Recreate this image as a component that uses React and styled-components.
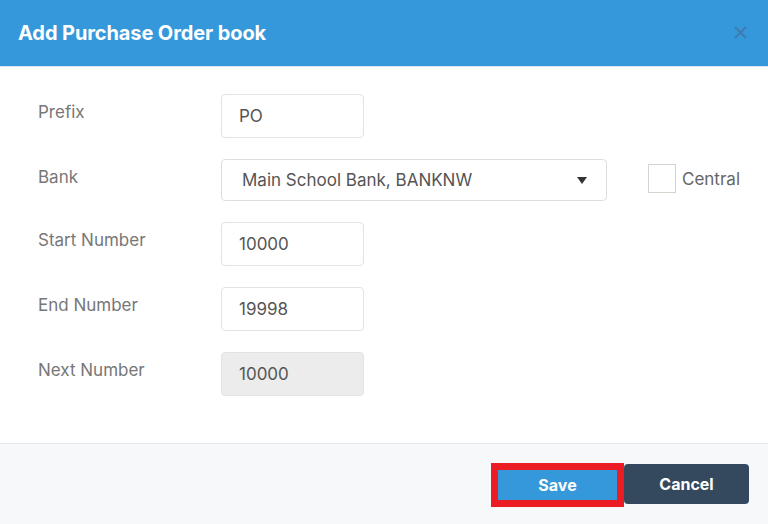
import React from "react";
import styled, { createGlobalStyle } from "styled-components";

const GlobalStyle = createGlobalStyle`
  * { box-sizing: border-box; }
  body {
    margin: 0;
    background: #ffffff;
    font-family: Inter, "Open Sans", Arial, sans-serif;
  }
`;

const Modal = styled.div`
  width: 768px;
  height: 524px;
  display: flex;
  flex-direction: column;
  background: #fff;
`;

const Header = styled.div`
  height: 67px;
  background: #3598db;
  display: flex;
  align-items: center;
  justify-content: space-between;
  padding: 0 21px 1px 18px;
  border-bottom: 1px solid #d8e6f2;
`;

const Title = styled.h2`
  margin: 0;
  color: #fff;
  font-size: 20px;
  font-weight: 700;
  letter-spacing: -0.1px;
`;

const Close = styled.button`
  border: none;
  background: none;
  padding: 0;
  width: 14px;
  height: 14px;
  display: flex;
  align-items: center;
  justify-content: center;
  cursor: pointer;
`;

const Body = styled.div`
  flex: 1;
  padding: 27px 0 0 38px;
  display: flex;
  flex-direction: column;
  gap: 21px;
`;

const Row = styled.div`
  display: flex;
  align-items: flex-start;
`;

const Label = styled.label`
  width: 183px;
  padding-top: 8px;
  font-size: 17px;
  line-height: 20px;
  color: #777;
`;

const Input = styled.input`
  width: 143px;
  height: 44px;
  border: 1px solid #e3e3e3;
  border-radius: 4px;
  padding: 0 0 0 17px;
  font-family: inherit;
  font-size: 17px;
  color: #555;
  background: ${(props) => (props.disabled ? "#ececec" : "#fff")};
  outline: none;
`;

const Select = styled.div`
  width: 386px;
  height: 42px;
  border: 1px solid #dedede;
  border-radius: 4px;
  padding: 0 19px 0 20px;
  display: flex;
  align-items: center;
  justify-content: space-between;
  font-size: 17px;
  color: #555;
`;

const Caret = styled.span`
  width: 0;
  height: 0;
  border-left: 5px solid transparent;
  border-right: 5px solid transparent;
  border-top: 7px solid #333;
`;

const CheckWrap = styled.label`
  margin-left: 41px;
  margin-top: 5px;
  display: flex;
  align-items: center;
  gap: 6px;
  font-size: 17px;
  color: #666;
`;

const Box = styled.span`
  width: 28px;
  height: 29px;
  border: 1px solid #d6d2cc;
  background: #fff;
`;

const Footer = styled.div`
  height: 81px;
  background: #f7f8fa;
  border-top: 1px solid #e6e7e9;
  display: flex;
  align-items: center;
  justify-content: flex-end;
  padding: 0 19px 0 0;
`;

const Button = styled.button`
  border: none;
  border-radius: 4px;
  color: #fff;
  font-family: inherit;
  font-size: 16px;
  font-weight: 700;
  cursor: pointer;
  background: ${(props) => (props.$primary ? "#3598db" : "#34495e")};
`;

const SaveButton = styled(Button)`
  width: 133px;
  height: 44px;
  border-radius: 0;
  border: 7px solid #ec1c24;
  margin-top: 1px;
`;

const CancelButton = styled(Button)`
  width: 125px;
  height: 40px;
`;

export default function App() {
  return (
    <>
      <GlobalStyle />
      <Modal>
        <Header>
          <Title>Add Purchase Order book</Title>
          <Close aria-label="Close">
            <svg width="13" height="13" viewBox="0 0 13 13">
              <path d="M1 1L12 12M12 1L1 12" stroke="#3f7db0" strokeWidth="2" />
            </svg>
          </Close>
        </Header>
        <Body>
          <Row>
            <Label>Prefix</Label>
            <Input defaultValue="PO" />
          </Row>
          <Row>
            <Label>Bank</Label>
            <Select>
              <span>Main School Bank, BANKNW</span>
              <Caret />
            </Select>
            <CheckWrap>
              <Box />
              Central
            </CheckWrap>
          </Row>
          <Row>
            <Label>Start Number</Label>
            <Input defaultValue="10000" />
          </Row>
          <Row>
            <Label>End Number</Label>
            <Input defaultValue="19998" />
          </Row>
          <Row>
            <Label>Next Number</Label>
            <Input defaultValue="10000" disabled />
          </Row>
        </Body>
        <Footer>
          <SaveButton $primary>Save</SaveButton>
          <CancelButton>Cancel</CancelButton>
        </Footer>
      </Modal>
    </>
  );
}
